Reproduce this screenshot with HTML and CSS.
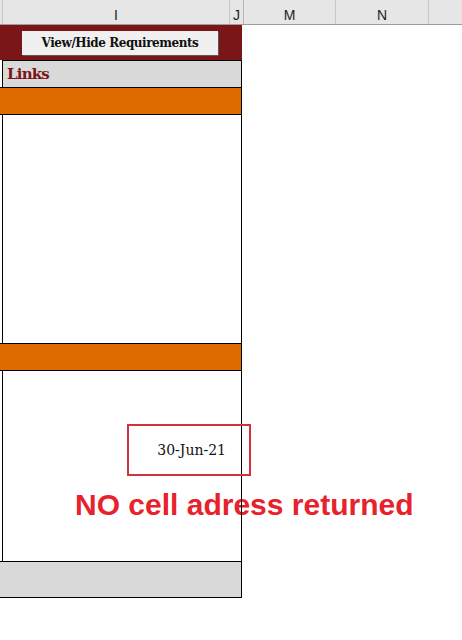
FILE: index.html
```html
<!DOCTYPE html>
<html>
<head>
<meta charset="utf-8">
<link rel="stylesheet" href="styles.css">
</head>
<body>
<div class="page">
  <div class="colheads">
    <div class="ch ch-h"></div>
    <div class="ch ch-i">I</div>
    <div class="ch ch-j">J</div>
    <div class="ch ch-m">M</div>
    <div class="ch ch-n">N</div>
    <div class="ch ch-o"></div>
  </div>
  <div class="sheet">
    <div class="band">
      <button class="btn">View/Hide Requirements</button>
    </div>
    <div class="links">Links</div>
    <div class="orange"></div>
    <div class="blank blank-1"></div>
    <div class="orange"></div>
    <div class="blank blank-2"></div>
    <div class="footer"></div>
  </div>
  <div class="datebox">30-Jun-21</div>
  <div class="notice">NO cell adress returned</div>
</div>
</body>
</html>
```
FILE: styles.css
```css
html {
  margin: 0;
  padding: 0;
  background: #ffffff;
}
body {
  margin: 0;
  padding: 0;
}
.page {
  position: relative;
  width: 462px;
  height: 640px;
  overflow: hidden;
}
.colheads {
  display: flex;
  height: 24px;
  background: #e6e6e6;
  border-bottom: 1px solid #9d9d9d;
  font-family: "Liberation Sans", Arial, sans-serif;
  font-size: 14px;
  color: #222;
}
.ch {
  box-sizing: border-box;
  border-right: 1px solid #c6c6c6;
  display: flex;
  align-items: center;
  justify-content: center;
  padding-top: 5px;
}
.ch-h { width: 3px; }
.ch-i { width: 227px; }
.ch-j { width: 14px; border-right-color: #b4b4b4; }
.ch-m { width: 92px; }
.ch-n { width: 93px; }
.ch-o { flex: 1; border-right: none; }

.sheet {
  width: 242px;
}
.band {
  background: #7a1518;
  height: 35px;
  box-sizing: border-box;
  padding: 6px 0 0 22px;
}
.btn {
  display: block;
  width: 196px;
  height: 24px;
  margin: 0;
  padding: 0;
  background: #f0f0f0;
  border: none;
  box-shadow: 1px 1px 0 #5a5a5a;
  font-family: "DejaVu Serif", Georgia, serif;
  font-weight: bold;
  font-size: 12px;
  letter-spacing: -0.45px;
  color: #111;
  text-align: center;
}
.links {
  margin-left: 2px;
  height: 26px;
  border: 1px solid #000;
  border-bottom: none;
  background: #d9d9d9;
  font-family: "DejaVu Serif", Georgia, serif;
  font-weight: bold;
  font-size: 15px;
  letter-spacing: -0.8px;
  color: #7a1518;
  line-height: 26px;
  padding-left: 4px;
  width: 234px;
}
.orange {
  width: 241px;
  height: 26px;
  background: #dd6b00;
  border-top: 1px solid #000;
  border-bottom: 1px solid #000;
  border-right: 1px solid #000;
}
.blank {
  margin-left: 2px;
  width: 238px;
  border-left: 1px solid #000;
  border-right: 1px solid #000;
}
.blank-1 { height: 228px; }
.blank-2 { height: 190px; }
.footer {
  width: 241px;
  height: 35px;
  background: #d9d9d9;
  border-top: 1px solid #000;
  border-bottom: 1px solid #000;
  border-right: 1px solid #000;
}
.datebox {
  position: absolute;
  left: 127px;
  top: 424px;
  width: 97px;
  height: 48px;
  padding-right: 23px;
  border: 2px solid #d0323e;
  display: flex;
  align-items: center;
  justify-content: flex-end;
  font-family: "DejaVu Serif", Georgia, serif;
  font-size: 14px;
  color: #111;
}
.notice {
  position: absolute;
  left: 75px;
  top: 490px;
  z-index: -1;
  font-family: "Liberation Sans", Arial, sans-serif;
  font-weight: bold;
  font-size: 30px;
  line-height: 30px;
  color: #e8222c;
  white-space: nowrap;
}
```
